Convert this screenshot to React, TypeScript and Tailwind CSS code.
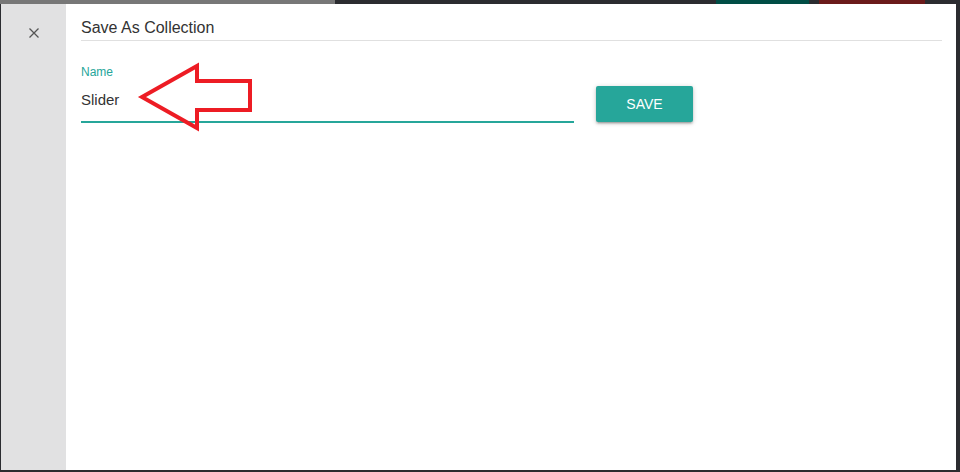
export default function App() {
  return (
    <div className="relative w-[960px] h-[472px] bg-[#2b2c30] flex flex-col overflow-hidden font-['Liberation_Sans',Arial,sans-serif]">
      {/* page behind the modal, only a sliver shows */}
      <div className="h-[4px] flex shrink-0">
        <div className="w-[335px] bg-[#777777]" />
        <div className="w-[381px]" />
        <div className="w-[93px] bg-[#004d45]" />
        <div className="w-[10px]" />
        <div className="w-[106px] bg-[#6b1a1a]" />
      </div>

      <div className="flex flex-1 pl-px pr-[4px] pb-[2px]">
        <div className="flex flex-1 bg-white">
          <div className="w-[65px] bg-[#e1e1e2] flex justify-center pt-[24px]">
            <svg width="10" height="10" viewBox="0 0 10 10" className="text-[#555]">
              <path d="M0.5 0.5 L9.5 9.5 M9.5 0.5 L0.5 9.5" stroke="currentColor" strokeWidth="1.3" />
            </svg>
          </div>

          <div className="flex-1 pl-[15px] pr-[14px] pt-[12px]">
            <div className="text-[16px] leading-[24px] text-[#333] border-b border-[#e0e0e0]">
              Save As Collection
            </div>

            <div className="flex items-end mt-[23px]">
              <div className="w-[493px]">
                <div className="text-[12px] leading-[16px] text-[#26a69a]">Name</div>
                <div className="mt-[8px] pb-[9px] border-b-2 border-[#26a69a] text-[15px] leading-[24px] text-[#333]">
                  Slider
                </div>
              </div>
              <button className="ml-[22px] mb-px w-[97px] h-[36px] rounded-[2px] bg-[#26a69a] text-white text-[14px] shadow-[0_2px_2px_0_rgba(0,0,0,0.14),0_3px_1px_-2px_rgba(0,0,0,0.12),0_1px_5px_0_rgba(0,0,0,0.2)]">
                SAVE
              </button>
            </div>
          </div>
        </div>
      </div>

      {/* annotation arrow drawn over the screenshot */}
      <svg className="absolute left-0 top-0 pointer-events-none" width="960" height="472">
        <polygon
          points="142,97 197,66 197,81 250,81 250,110 197,110 197,128"
          fill="none"
          stroke="#ed1c24"
          strokeWidth="4"
          strokeLinejoin="miter"
        />
      </svg>
    </div>
  );
}
